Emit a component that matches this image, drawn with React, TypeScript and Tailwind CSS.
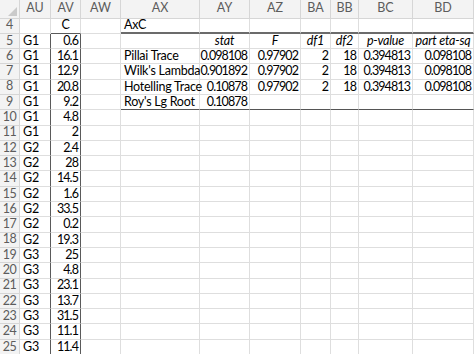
import React from 'react';

const cols = [
  { id: '', w: 'w-[20px]' },
  { id: 'AU', w: 'w-[31px]' },
  { id: 'AV', w: 'w-[30px]' },
  { id: 'AW', w: 'w-[40px]' },
  { id: 'AX', w: 'w-[79px]' },
  { id: 'AY', w: 'w-[50px]' },
  { id: 'AZ', w: 'w-[51px]' },
  { id: 'BA', w: 'w-[30px]' },
  { id: 'BB', w: 'w-[28px]' },
  { id: 'BC', w: 'w-[54px]' },
  { id: 'BD', w: 'w-[61px]' },
];

const groups: [string, string][] = [
  ['G1', '0.6'], ['G1', '16.1'], ['G1', '12.9'], ['G1', '20.8'], ['G1', '9.2'],
  ['G1', '4.8'], ['G1', '2'], ['G2', '2.4'], ['G2', '28'], ['G2', '14.5'],
  ['G2', '1.6'], ['G2', '33.5'], ['G2', '0.2'], ['G2', '19.3'], ['G3', '25'],
  ['G3', '4.8'], ['G3', '23.1'], ['G3', '13.7'], ['G3', '31.5'], ['G3', '11.1'],
  ['G3', '11.4'],
];

const heads = ['stat', 'F', 'df1', 'df2', 'p-value', 'part eta-sq'];

const stats: string[][] = [
  ['Pillai Trace', '0.098108', '0.97902', '2', '18', '0.394813', '0.098108'],
  ["Wilk's Lambda", '0.901892', '0.97902', '2', '18', '0.394813', '0.098108'],
  ['Hotelling Trace', '0.10878', '0.97902', '2', '18', '0.394813', '0.098108'],
  ["Roy's Lg Root", '0.10878', '', '', '', '', ''],
];

type Cell = { text?: string; align?: 'l' | 'r' | 'c'; italic?: boolean };

const App: React.FC = () => {
  const rows: { n: number; cells: Cell[] }[] = [];
  for (let n = 4; n <= 25; n++) {
    const cells: Cell[] = Array.from({ length: 10 }, () => ({}));
    if (n === 4) {
      cells[1] = { text: 'C', align: 'c' };
      cells[3] = { text: 'AxC', align: 'l' };
    } else {
      const g = groups[n - 5];
      cells[0] = { text: g[0], align: 'l' };
      cells[1] = { text: g[1], align: 'r' };
    }
    if (n === 5) {
      heads.forEach((h, i) => (cells[4 + i] = { text: h, align: 'c', italic: true }));
    }
    if (n >= 6 && n <= 9) {
      const s = stats[n - 6];
      cells[3] = { text: s[0], align: 'l' };
      s.slice(1).forEach((v, i) => (cells[4 + i] = { text: v, align: 'r' }));
    }
    rows.push({ n, cells });
  }

  // borders for each cell: table rules and the box round column AV
  const borderFor = (n: number, i: number) => {
    let right = 'border-r-[#dedede]';
    let bottom = 'border-b border-b-[#dedede]';
    if (i >= 3 && n === 4) bottom = 'border-b-2 border-b-[#6b6b6b]';
    if (i >= 3 && n === 9) bottom = 'border-b border-b-[#555555]';
    if ((i === 0 || i === 1) && n >= 5) right = 'border-r-[#5a5a5a]';
    if (i === 1 && (n === 4 || n === 25)) bottom = 'border-b border-b-[#5a5a5a]';
    return `border-r ${right} ${bottom}`;
  };

  return (
    <div className="w-[474px] h-[354px] overflow-hidden bg-white text-[12.5px] text-black" style={{ fontFamily: 'Lato, "Open Sans", sans-serif' }}>
      {/* column headers */}
      <div className="flex h-[18.5px] bg-[#f3f3f3] text-[#5c5c5c] text-[12.5px]">
        {cols.map((c, i) => (
          <div
            key={i}
            className={`${c.w} shrink-0 flex border-r border-b border-[#d6d6d6] ${
              i === 0 ? 'items-end justify-end p-[2px]' : 'items-center justify-center'
            }`}
          >
            {i === 0 ? (
              <div className="w-0 h-0 border-l-[9px] border-l-transparent border-b-[9px] border-b-[#cacaca]" />
            ) : (
              c.id
            )}
          </div>
        ))}
      </div>

      {rows.map(({ n, cells }) => (
        <div key={n} className="flex h-[15.3px]">
          <div className="w-[20px] shrink-0 flex items-center justify-center bg-[#f3f3f3] text-[#5c5c5c] text-[12.5px] tracking-[-0.4px] border-r border-b border-[#d6d6d6]">
            {n}
          </div>
          {cells.map((c, i) => (
            <div
              key={i}
              className={`${cols[i + 1].w} shrink-0 flex items-center whitespace-nowrap ${borderFor(n, i)} ${
                c.align === 'r'
                  ? 'justify-end pr-[2px] text-[12.5px] tracking-[-0.9px]'
                  : c.align === 'c'
                  ? 'justify-center tracking-[-0.2px]'
                  : 'pl-[3px] tracking-[-0.25px]'
              } ${c.italic ? 'italic' : ''}`}
            >
              <span className="leading-none">{c.text}</span>
            </div>
          ))}
        </div>
      ))}
    </div>
  );
};

export default App;
